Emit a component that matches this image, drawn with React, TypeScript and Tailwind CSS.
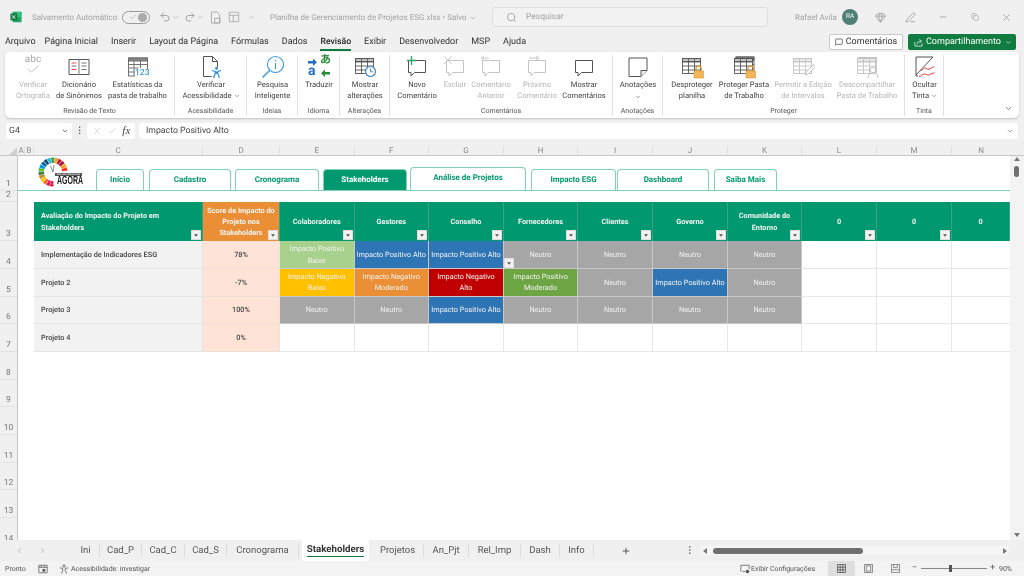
import React from 'react';
import { ChevronDown, ChevronLeft, ChevronRight, Minus, X, Plus, Search, Undo2, Redo2, Gem, PenLine, MessageSquare, Check, Copy } from 'lucide-react';

const gridCols = 'grid-cols-[169px_77px_74.5px_74.5px_75px_74px_75px_75px_74px_75px_75px_58px]';

// ---- ribbon icons ----
const Bubble = ({ c = '#555' }: { c?: string }) => (
  <path d="M3.5 5.5h17v12h-11l-3.5 3.5v-3.5h-2.5z" fill="#fff" stroke={c} strokeWidth="1" />
);

const SheetGrid = ({ c = '#555' }: { c?: string }) => (
  <g fill="none" stroke={c} strokeWidth="0.9">
    <rect x="2.5" y="3.5" width="18" height="15" fill="#fff" />
    <path d="M2.5 7h18M2.5 11h18M2.5 15h18M8.5 3.5v15M14.5 3.5v15" />
    <path d="M2.5 3.5h18v3h-18z" fill={c} fillOpacity="0.35" />
  </g>
);

const Lock = () => (
  <g>
    <path d="M16 16v-2.5a2.6 2.6 0 0 1 5.2 0V16" fill="none" stroke="#d9962f" strokeWidth="1.1" />
    <rect x="14" y="16" width="9.4" height="7" fill="#f3b559" stroke="#d9962f" strokeWidth="0.6" />
  </g>
);

const Ico = ({ children }: { children: React.ReactNode }) => (
  <svg viewBox="0 0 24 24" className="w-[24px] h-[24px]">{children}</svg>
);

const icons: Record<string, React.ReactNode> = {
  abc: (
    <div className="flex flex-col items-center h-[24px] text-[#a8a8a8] text-[10px] leading-[10px]">
      abc
      <svg viewBox="0 0 16 10" className="w-[14px] h-[9px]"><path d="M2 4l4 4 8-7" fill="none" stroke="#bdbdbd" strokeWidth="1" /></svg>
    </div>
  ),
  book: (
    <Ico>
      <path d="M2 4.500h9.500l.5.700.5-.700H22v15H12.500l-.5.600-.5-.600H2z" fill="#fff" stroke="#555" strokeWidth="1" />
      <path d="M12 5v14.500" stroke="#555" strokeWidth="0.8" />
      <path d="M4.500 8h5M4.500 14.500h5" stroke="#e0574f" strokeWidth="1" />
      <path d="M4.500 11h5M14.500 8h5M14.500 11h5M14.500 14.500h5" stroke="#777" strokeWidth="1" />
    </Ico>
  ),
  stats: (
    <div className="relative w-[24px] h-[24px]">
      <Ico>
        <g fill="none" stroke="#666" strokeWidth="0.9">
          <rect x="2.500" y="3" width="19" height="18" fill="#fff" />
          <path d="M2.500 3h19v3h-19z" fill="#888" />
          <path d="M2.500 9.500h19M2.500 13h10M2.500 17h8M8 6v15M14.500 6v7" />
        </g>
      </Ico>
      <span className="absolute right-0 bottom-[1px] bg-white text-[#3a9bdc] text-[8.5px] leading-[9px] font-medium">123</span>
    </div>
  ),
  access: (
    <Ico>
      <path d="M4.500 1.500h9l5 5v6" fill="none" stroke="#555" strokeWidth="1" />
      <path d="M4.500 1.500v20h8" fill="none" stroke="#555" strokeWidth="1" />
      <path d="M13.500 1.500v5h5" fill="none" stroke="#555" strokeWidth="1" />
      <circle cx="17.500" cy="13.500" r="1.400" fill="#2f8fd8" />
      <path d="M13 15.500l3.200 1v2l-1.600 4.500M22 15.500l-3.200 1v2l1.600 4.500" fill="none" stroke="#2f8fd8" strokeWidth="1.200" />
      <path d="M16.200 16.500h2.600v2.500h-2.600z" fill="#2f8fd8" />
    </Ico>
  ),
  search: (
    <Ico>
      <circle cx="14.500" cy="9.500" r="8" fill="#fff" stroke="#3b97da" strokeWidth="1.100" />
      <path d="M8.800 15.200L1.500 22.500" stroke="#3b97da" strokeWidth="1.400" />
      <path d="M14.500 8v6" stroke="#3b97da" strokeWidth="1.100" />
      <circle cx="14.500" cy="5.700" r="0.800" fill="#3b97da" />
    </Ico>
  ),
  translate: (
    <div className="relative w-[24px] h-[24px]">
      <Ico>
        <path d="M1 6h5V3.500l4 3.800-4 3.800V8.500H1z" fill="#1f6fc2" />
        <path d="M23 17h-5v-2.500l-4 3.800 4 3.800v-2.600h5z" fill="#2c8c3c" />
      </Ico>
      <span className="absolute left-[1px] top-[9px] text-[#1f6fc2] text-[14px] leading-[14px] font-bold">a</span>
      <span className="absolute right-[0px] top-[-2px] text-[#2c8c3c] text-[11px] leading-[13px] font-bold font-['Noto_Sans_CJK_JP',sans-serif]">あ</span>
    </div>
  ),
  changes: (
    <Ico>
      <SheetGrid />
      <circle cx="17.500" cy="16.500" r="5" fill="#fff" stroke="#3b8ccf" strokeWidth="1.200" />
      <path d="M17.500 13.500v3.300h2.400" fill="none" stroke="#3b8ccf" strokeWidth="1" />
    </Ico>
  ),
  newComment: (
    <Ico>
      <Bubble />
      <path d="M6.500 1v9M2 5.500h9" stroke="#2aa36b" strokeWidth="1.300" />
    </Ico>
  ),
  delComment: (
    <Ico>
      <Bubble c="#c4c4c4" />
      <path d="M1 1.500l7.500 7.500M8.500 1.500L1 9" stroke="#c4c4c4" strokeWidth="1" />
    </Ico>
  ),
  prevComment: (
    <Ico>
      <Bubble c="#c4c4c4" />
      <path d="M10 3H2.500M5 .8L2.500 3 5 5.200" fill="none" stroke="#c4c4c4" strokeWidth="1" />
    </Ico>
  ),
  nextComment: (
    <Ico>
      <Bubble c="#c4c4c4" />
      <path d="M4 3h9.500M11 .8L13.500 3 11 5.200" fill="none" stroke="#c4c4c4" strokeWidth="1" />
    </Ico>
  ),
  showComments: <Ico><Bubble /></Ico>,
  note: (
    <Ico>
      <path d="M3 3h18v12.500L15 21.500H3z" fill="#fff" stroke="#555" strokeWidth="1" />
      <path d="M21 15.500h-6v6" fill="#eee" stroke="#555" strokeWidth="1" />
    </Ico>
  ),
  unprotect: <Ico><SheetGrid /><Lock /></Ico>,
  protect: (
    <Ico>
      <g transform="translate(1.500 -1.500)"><SheetGrid /></g>
      <SheetGrid />
      <Lock />
    </Ico>
  ),
  ranges: (
    <Ico>
      <SheetGrid c="#c4c4c4" />
      <path d="M14.500 20l.8-3 7-7.500 2 2-7 7.500z" fill="#fff" stroke="#bbb" strokeWidth="0.900" />
    </Ico>
  ),
  unshare: (
    <Ico>
      <g transform="translate(1 -1)"><SheetGrid c="#c4c4c4" /></g>
      <SheetGrid c="#c4c4c4" />
      <circle cx="18" cy="15" r="2.800" fill="#fff" stroke="#bbb" strokeWidth="0.900" />
      <path d="M13 23c0-3.500 2-4.800 5-4.800s5 1.300 5 4.800" fill="#fff" stroke="#bbb" strokeWidth="0.900" />
    </Ico>
  ),
  ink: (
    <Ico>
      <path d="M3 2h17" stroke="#555" strokeWidth="1" />
      <path d="M3 2v19h2M20 2L3 20" fill="none" stroke="#555" strokeWidth="1" />
      <path d="M7 15c2 1.500 3-2 5-2s2 2 4 1.200 3-2 5-2.500M6 21.500c3-.5 3-2.500 5.500-2.500s3 1.800 5 .8 3-1.800 5-2" fill="none" stroke="#e8413c" strokeWidth="1" />
    </Ico>
  ),
};

type RibbonItem = { icon: string; lines: string[]; w: string; off?: boolean; drop?: boolean; dropLine?: boolean };
type RibbonGroup = { label: string; w: string; pad?: string; items: RibbonItem[] };

const groups: RibbonGroup[] = [
  {
    label: 'Revisão de Texto', w: 'w-[170px]', pad: 'pl-[3px]',
    items: [
      { icon: 'abc', lines: ['Verificar', 'Ortografia'], w: 'w-[50px]', off: true },
      { icon: 'book', lines: ['Dicionário', 'de Sinônimos'], w: 'w-[42px]' },
      { icon: 'stats', lines: ['Estatísticas da', 'pasta de trabalho'], w: 'w-[75px]' },
    ],
  },
  {
    label: 'Acessibilidade', w: 'w-[72px]',
    items: [{ icon: 'access', lines: ['Verificar', 'Acessibilidade'], w: 'w-[72px]', drop: true }],
  },
  { label: 'Ideias', w: 'w-[51px]', items: [{ icon: 'search', lines: ['Pesquisa', 'Inteligente'], w: 'w-[51px]' }] },
  { label: 'Idioma', w: 'w-[42px]', items: [{ icon: 'translate', lines: ['Traduzir'], w: 'w-[42px]' }] },
  { label: 'Alterações', w: 'w-[50px]', items: [{ icon: 'changes', lines: ['Mostrar', 'alterações'], w: 'w-[50px]' }] },
  {
    label: 'Comentários', w: 'w-[223px]',
    items: [
      { icon: 'newComment', lines: ['Novo', 'Comentário'], w: 'w-[54px]' },
      { icon: 'delComment', lines: ['Excluir'], w: 'w-[22px]', off: true },
      { icon: 'prevComment', lines: ['Comentário', 'Anterior'], w: 'w-[50px]', off: true },
      { icon: 'nextComment', lines: ['Próximo', 'Comentário'], w: 'w-[42px]', off: true },
      { icon: 'showComments', lines: ['Mostrar', 'Comentários'], w: 'w-[52px]' },
    ],
  },
  { label: 'Anotações', w: 'w-[50px]', items: [{ icon: 'note', lines: ['Anotações'], w: 'w-[50px]', dropLine: true }] },
  {
    label: 'Proteger', w: 'w-[242px]',
    items: [
      { icon: 'unprotect', lines: ['Desproteger', 'planilha'], w: 'w-[58px]' },
      { icon: 'protect', lines: ['Proteger Pasta', 'de Trabalho'], w: 'w-[46px]' },
      { icon: 'ranges', lines: ['Permitir a Edição', 'de Intervalos'], w: 'w-[72px]', off: true },
      { icon: 'unshare', lines: ['Descompartilhar', 'Pasta de Trabalho'], w: 'w-[56px]', off: true },
    ],
  },
  { label: 'Tinta', w: 'w-[39px]', items: [{ icon: 'ink', lines: ['Ocultar', 'Tinta'], w: 'w-[39px]', drop: true }] },
];

const menu = ['Arquivo', 'Página Inicial', 'Inserir', 'Layout da Página', 'Fórmulas', 'Dados', 'Revisão', 'Exibir', 'Desenvolvedor', 'MSP', 'Ajuda'];

const navTabs = [
  { label: 'Início', cls: 'w-[48px] mr-[5px]' },
  { label: 'Cadastro', cls: 'w-[82px] mr-[4px]' },
  { label: 'Cronograma', cls: 'w-[84px] mr-[4px]' },
  { label: 'Stakeholders', cls: 'w-[84px] mr-[3px]', active: true },
  { label: 'Análise de Projetos', cls: 'w-[116px] mr-[5px] h-[23px] pb-[2px]' },
  { label: 'Impacto ESG', cls: 'w-[85px] mr-[1px]' },
  { label: 'Dashboard', cls: 'w-[92px] mr-[5px]' },
  { label: 'Saiba Mais', cls: 'w-[63px]' },
];

const headers = [
  { text: 'Avaliação do Impacto do Projeto em Stakeholders', cls: 'bg-[#00996f] justify-start text-left pl-[7px] pr-[20px]' },
  { text: 'Score de Impacto do Projeto nos Stakeholders', cls: 'bg-[#ea8f35] justify-center text-center px-[3px]' },
  { text: 'Colaboradores' },
  { text: 'Gestores' },
  { text: 'Conselho' },
  { text: 'Fornecedores' },
  { text: 'Clientes' },
  { text: 'Governo' },
  { text: 'Comunidade do Entorno' },
  { text: '0' },
  { text: '0' },
  { text: '0', noFilter: true },
];

const palette: Record<string, string> = {
  alto: 'bg-[#2e75b6]',
  baixo: 'bg-[#a9d18e]',
  negBaixo: 'bg-[#ffc000]',
  negMod: 'bg-[#ea8f35]',
  negAlto: 'bg-[#c00000]',
  mod: 'bg-[#6ea544]',
  neutro: 'bg-[#a6a6a6]',
};

const labels: Record<string, string> = {
  alto: 'Impacto Positivo Alto',
  baixo: 'Impacto Positivo Baixo',
  negBaixo: 'Impacto Negativo Baixo',
  negMod: 'Impacto Negativo Moderado',
  negAlto: 'Impacto Negativo Alto',
  mod: 'Impacto Positivo Moderado',
  neutro: 'Neutro',
};

const rows = [
  { name: 'Implementação de Indicadores ESG', score: '78%', vals: ['baixo', 'alto', 'alto', 'neutro', 'neutro', 'neutro', 'neutro'] },
  { name: 'Projeto 2', score: '-7%', vals: ['negBaixo', 'negMod', 'negAlto', 'mod', 'neutro', 'alto', 'neutro'] },
  { name: 'Projeto 3', score: '100%', vals: ['neutro', 'neutro', 'alto', 'neutro', 'neutro', 'neutro', 'neutro'] },
  { name: 'Projeto 4', score: '0%', vals: ['', '', '', '', '', '', ''] },
];

const rowHeads = [
  { n: '1', cls: 'h-[35px]' },
  { n: '2', cls: 'h-[11px]' },
  { n: '3', cls: 'h-[39px]' },
  { n: '4', cls: 'h-[28px]' },
  { n: '5', cls: 'h-[27.5px]' },
  { n: '6', cls: 'h-[27.5px]' },
  { n: '7', cls: 'h-[28px]' },
  { n: '8', cls: 'h-[27.7px]' },
  { n: '9', cls: 'h-[27.7px]' },
  { n: '10', cls: 'h-[27.7px]' },
  { n: '11', cls: 'h-[27.7px]' },
  { n: '12', cls: 'h-[27.7px]' },
  { n: '13', cls: 'h-[27.7px]' },
  { n: '14', cls: 'h-[27.7px]' },
];

const sheetTabs = [
  { t: 'Ini', w: 'w-[28px]' },
  { t: 'Cad_P', w: 'w-[42px]' },
  { t: 'Cad_C', w: 'w-[43px]' },
  { t: 'Cad_S', w: 'w-[42px]' },
  { t: 'Cronograma', w: 'w-[72px]' },
];
const sheetTabs2 = [
  { t: 'Projetos', w: 'w-[52px]' },
  { t: 'An_Pjt', w: 'w-[45px]' },
  { t: 'Rel_Imp', w: 'w-[52px]' },
  { t: 'Dash', w: 'w-[39px]' },
  { t: 'Info', w: 'w-[34px]' },
];

const colLetters = ['A', 'B', 'C', 'D', 'E', 'F', 'G', 'H', 'I', 'J', 'K', 'L', 'M', 'N'];

const sdg = ['#e5243b', '#dd1367', '#fd6925', '#fcc30b', '#bf8b2e', '#3f7e44', '#56c02b', '#0a97d9', '#00689d', '#19486a', '#26bde2', '#4c9f38', '#dda63a', '#c5192d', '#a21942', '#fd9d24', '#ff3a21'];

const segment = (i: number) => {
  // anel aberto no canto inferior direito
  const start = 88 + i * 15.8;
  const end = start + 14;
  const pt = (a: number, r: number) => {
    const rad = (a * Math.PI) / 180;
    return `${(15 + r * Math.cos(rad)).toFixed(2)} ${(15 + r * Math.sin(rad)).toFixed(2)}`;
  };
  return `M${pt(start, 14.5)} A14.5 14.5 0 0 1 ${pt(end, 14.5)} L${pt(end, 9)} A9 9 0 0 0 ${pt(start, 9)} Z`;
};

const Logo = () => (
  <div className="relative w-[44px] h-[31px] ml-[20px] mr-[14px] mb-[2px] shrink-0">
    <svg viewBox="0 0 30 30" className="absolute left-0 top-0 w-[30px] h-[30px]">
      {sdg.map((c, i) => <path key={i} d={segment(i)} fill={c} />)}
      <path d="M15 15l-2.500-6M15 15l1-7" stroke="#555" strokeWidth="0.7" />
    </svg>
    <span className="absolute left-[17px] top-[16px] w-[27px] h-[3px] bg-[#555] text-white text-[2.6px] leading-[3px] text-center whitespace-nowrap overflow-hidden">SUSTENTABILIDADE</span>
    <span className="absolute left-[19px] top-[20px] text-[#222] text-[7px] leading-[6px] font-bold font-['Liberation_Sans',sans-serif] scale-y-[1.7] origin-top">AGORA</span>
  </div>
);

const FilterBtn = ({ cls = 'right-[1px] bottom-[1px]' }: { cls?: string }) => (
  <span className={`absolute ${cls} w-[10px] h-[10px] bg-[#f2f2f2] border border-[#ddd] flex items-center justify-center`}>
    <svg viewBox="0 0 6 4" className="w-[4px] h-[3px]"><path d="M0 0h6L3 4z" fill="#555" /></svg>
  </span>
);

export default function App() {
  return (
    <div className="w-[1024px] h-[576px] overflow-hidden flex flex-col bg-[#f0f0f0] text-[#333] font-['Roboto','Noto_Sans',sans-serif] [text-rendering:geometricPrecision] blur-[0.3px]">
      {/* barra de título */}
      <div className="h-[34px] shrink-0 flex items-center text-[#a3a3a3] text-[8px]">
        <svg viewBox="0 0 14 14" className="w-[12px] h-[12px] ml-[10px]">
          <rect x="3" y="1" width="10.500" height="12" rx="1" fill="#21a366" />
          <rect x="8" y="1" width="5.500" height="6" fill="#33c481" />
          <rect x="0.500" y="3" width="8" height="8" rx="1" fill="#107c41" />
          <path d="M2.500 5l3.500 4M6 5L2.500 9" stroke="#fff" strokeWidth="1" />
        </svg>
        <span className="ml-[10px] w-[87px] pt-[1px] whitespace-nowrap">Salvamento Automático</span>
        <div className="ml-[3px] w-[28px] h-[13px] rounded-full border border-[#999] flex items-center justify-between pl-[6px] pr-[2px]">
          <Check size={8} strokeWidth={2} />
          <span className="w-[9px] h-[9px] rounded-full bg-[#aaa]" />
        </div>
        <Undo2 size={12} className="ml-[9px]" />
        <ChevronDown size={7} className="ml-[1px]" />
        <Redo2 size={12} className="ml-[5px]" />
        <ChevronDown size={7} className="ml-[1px]" />
        <svg viewBox="0 0 12 14" className="w-[11px] h-[13px] ml-[6px]"><path d="M1.500 1h6l3 3v9h-9zM5 8h6v5H5z" fill="none" stroke="#aaa" /></svg>
        <svg viewBox="0 0 14 14" className="w-[12px] h-[12px] ml-[7px]"><path d="M1.500 1.500h11v11h-11zM1.500 5h11M6 5v7.500" fill="none" stroke="#aaa" /></svg>
        <ChevronDown size={7} className="ml-[8px]" />
        <span className="ml-[15px] w-[208px] pt-[1px] whitespace-nowrap flex items-center">
          Planilha de Gerenciamento de Projetos ESG.xlsx • Salvo
          <ChevronDown size={8} className="ml-[2px]" />
        </span>
        <div className="ml-[14px] w-[276px] h-[20px] rounded-[3px] border border-[#dedede] bg-[#f2f2f2] flex items-center pl-[13px] text-[8.5px]">
          <Search size={11} />
          <span className="ml-[9px]">Pesquisar</span>
        </div>
        <span className="ml-[27px] w-[47px] pt-[1px] whitespace-nowrap">Rafael Avila</span>
        <span className="w-[16px] h-[16px] rounded-full bg-[#4f7f75] text-white text-[6.5px] flex items-center justify-center">RA</span>
        <Gem size={11} className="ml-[17px]" />
        <PenLine size={11} className="ml-[19px]" />
        <Minus size={10} className="ml-[22px]" />
        <Copy size={8} className="ml-[23px]" />
        <X size={11} className="ml-[22px]" />
      </div>

      {/* abas do menu */}
      <div className="h-[18px] shrink-0 flex items-center pl-[5px] text-[9px] text-[#333] relative">
        <div className="flex items-center gap-[13px] flex-1">
          {menu.map(m => (
            <span key={m} className={m === 'Revisão' ? 'font-medium text-[8.7px] text-[#222] border-b-[2px] border-[#107c41] leading-[13px] h-[15px] mt-[1px]' : m === 'Arquivo' ? 'mr-[-4px]' : 'whitespace-nowrap'}>{m}</span>
          ))}
        </div>
        <div className="flex items-center justify-center gap-[3px] w-[74px] h-[16px] mb-[2px] bg-white border border-[#c8c8c8] rounded-[2px] mr-[5px]">
          <MessageSquare size={8} />
          <span className="pt-[1px]">Comentários</span>
        </div>
        <div className="flex items-center pl-[6px] w-[108px] h-[16px] mb-[2px] bg-[#107c41] text-white rounded-[2px] mr-[8px]">
          <svg viewBox="0 0 10 10" className="w-[9px] h-[9px]"><path d="M1 4.500v4.500h8V6M3.500 7c0-2.500 1.500-3.500 4-3.500M6 1.500l2.500 2L6 5.500" fill="none" stroke="#fff" strokeWidth="0.8" /></svg>
          <span className="ml-[3px] pt-[1px]">Compartilhamento</span>
          <ChevronDown size={7} className="ml-auto mr-[4px]" />
        </div>
      </div>

      {/* faixa de opções */}
      <div className="mx-[5px] h-[66px] shrink-0 bg-white rounded-[5px] shadow-[0_1px_2px_rgba(0,0,0,0.2)] flex text-[7.6px] leading-[10.5px]">
        {groups.map(g => (
          <div key={g.label} className={`${g.w} shrink-0 border-r border-[#e2e2e2] mt-[3px] mb-[2px] flex flex-col items-stretch`}>
            <div className={`flex flex-1 ${g.pad ?? ''}`}>
              {g.items.map(it => (
                <div key={it.icon} className={`${it.w} shrink-0 flex flex-col items-center whitespace-nowrap ${it.off ? 'text-[#b5b5b5]' : 'text-[#444]'}`}>
                  <div className="h-[24px] flex items-center justify-center">{icons[it.icon]}</div>
                  <div className="mt-[1px]">{it.lines[0]}</div>
                  {it.lines[1] && (
                    <div className="flex items-center">
                      {it.lines[1]}
                      {it.drop && <ChevronDown size={6} className="ml-[2px]" />}
                    </div>
                  )}
                  {it.dropLine && <ChevronDown size={6} className="mt-[3px]" />}
                </div>
              ))}
            </div>
            <div className="text-center text-[7px] leading-[9px] text-[#555] whitespace-nowrap">{g.label}</div>
          </div>
        ))}
        <div className="flex-1 flex items-end justify-end pr-[6px] pb-[5px]">
          <ChevronDown size={9} className="text-[#555]" />
        </div>
      </div>

      {/* barra de fórmulas */}
      <div className="h-[16px] mt-[5px] shrink-0 flex items-center text-[8.7px]">
        <div className="ml-[6px] w-[66px] h-full bg-white rounded-[3px] flex items-center justify-between px-[3px] text-[#444]">
          <span className="pt-[1px]">G4</span>
          <ChevronDown size={8} />
        </div>
        <span className="w-[15px] text-center text-[#666] font-bold leading-[8px]">⋮</span>
        <div className="w-[48px] h-full bg-white rounded-[3px] flex items-center justify-around px-[2px] text-[#bbb]">
          <X size={10} strokeWidth={1.2} />
          <Check size={10} strokeWidth={1.2} />
          <span className="text-[#444] italic font-['Liberation_Serif',serif] text-[11px]">fx</span>
        </div>
        <div className="ml-[4px] w-[879px] h-full bg-white rounded-[3px] flex items-center justify-between pl-[7px] pr-[4px] text-[#444]">
          <span className="pt-[1px]">Impacto Positivo Alto</span>
          <ChevronDown size={8} className="text-[#777]" />
        </div>
      </div>

      {/* cabeçalho das colunas */}
      <div className="h-[9px] mt-[7px] shrink-0 flex text-[8px] leading-[9px] text-[#8a8a8a]">
        <div className="w-[18px] shrink-0 flex justify-end items-end pr-[1px]">
          <svg viewBox="0 0 8 8" className="w-[8px] h-[8px]"><path d="M8 0v8H0z" fill="#d0d0d0" /></svg>
        </div>
        <div className="w-[992px] shrink-0 grid grid-cols-[7px_9px_169px_77px_74.5px_74.5px_75px_74px_75px_75px_74px_75px_75px_58px]">
          {colLetters.map(l => (
            <div key={l} className="text-center border-r border-[#e0e0e0] last:border-r-0">{l}</div>
          ))}
        </div>
      </div>

      {/* planilha */}
      <div className="flex-1 min-h-0 flex border-t border-[#c6c6c6] overflow-hidden">
        <div className="w-[18px] shrink-0 bg-[#f0f0f0] border-r border-[#c6c6c6] text-[8.5px] text-[#777]">
          {rowHeads.map(r => (
            <div key={r.n} className={`${r.cls} flex items-end justify-center border-b border-[#e2e2e2] leading-[11px]`}>{r.n}</div>
          ))}
        </div>

        <div className="w-[992px] shrink-0 bg-white flex flex-col">
          <div className="h-[35px] shrink-0 flex items-end border-b border-[#7fd1b8]">
            <Logo />
            {navTabs.map(t => (
              <div
                key={t.label}
                className={`${t.cls} h-[21px] shrink-0 rounded-t-[4px] border border-b-0 border-[#7fd1b8] flex items-center justify-center text-[8px] font-bold ${t.active ? 'bg-[#00996f] text-white' : 'bg-white text-[#00996f]'}`}
              >
                {t.label}
              </div>
            ))}
          </div>

          <div className={`mt-[11px] ml-[16px] grid ${gridCols} grid-rows-[39px_28px_27.5px_27.5px_28px] text-[7.3px] leading-[11.3px]`}>
            {headers.map((h, i) => (
              <div
                key={i}
                className={`relative flex items-center font-bold text-[#f4f4f4] border-r border-[#3f9f84] ${h.cls ?? 'bg-[#00996f] justify-center text-center px-[5px]'}`}
              >
                <span>{h.text}</span>
                {!h.noFilter && <FilterBtn />}
              </div>
            ))}

            {rows.map(r => (
              <React.Fragment key={r.name}>
                <div className="bg-[#f2f2f2] text-[#444] font-medium flex items-center pl-[7px] border-b border-r border-[#e4e4e4]">{r.name}</div>
                <div className="bg-[#fde4d6] text-[#444] font-medium flex items-center justify-center border-b border-r border-[#efe0d8]">{r.score}</div>
                {r.vals.map((v, i) => (
                  <div
                    key={i}
                    className={`relative flex items-center justify-center text-center border-b border-r px-0 ${v ? `${palette[v]} text-[#f2f2f2] border-[#c8c8c8]` : 'border-[#e8e8e8]'}`}
                  >
                    <span className={v === 'baixo' || v === 'negBaixo' || v === 'negMod' || v === 'negAlto' || v === 'mod' ? 'px-[4px]' : 'whitespace-nowrap'}>{v ? labels[v] : ''}</span>
                    {r.score === '78%' && i === 2 && <FilterBtn cls="right-[-11px] bottom-[0px] z-10" />}
                  </div>
                ))}
                <div className="border-b border-r border-[#e8e8e8]" />
                <div className="border-b border-r border-[#e8e8e8]" />
                <div className="border-b border-[#e8e8e8]" />
              </React.Fragment>
            ))}
          </div>
        </div>

        {/* rolagem vertical */}
        <div className="flex-1 flex flex-col items-center pr-[1px] bg-[#f3f3f3]">
          <svg viewBox="0 0 6 4" className="w-[6px] h-[4px] mt-[1px]"><path d="M3 0l3 4H0z" fill="#777" /></svg>
          <div className="w-[5px] h-[11px] mt-[5px] rounded-full bg-[#707070]" />
          <svg viewBox="0 0 6 4" className="w-[6px] h-[4px] mt-auto mb-[3px]"><path d="M0 0h6L3 4z" fill="#777" /></svg>
        </div>
      </div>

      {/* abas das planilhas */}
      <div className="h-[21px] shrink-0 flex items-center text-[9.5px] text-[#555] relative">
        <span className="w-[72px] shrink-0 flex gap-[14px] pl-[15px] text-[#aaa]">
          <ChevronLeft size={9} />
          <ChevronRight size={9} />
        </span>
        {sheetTabs.map(t => (
          <div key={t.t} className={`${t.w} h-[13px] pt-[2px] shrink-0 flex items-center justify-center border-r border-[#dcdcdc] last:border-r-0`}>{t.t}</div>
        ))}
        <div className="w-[3px]" />
        <div className="w-[67px] h-full shrink-0 bg-white rounded-b-[3px] flex flex-col items-center justify-start pt-[3px] font-bold text-[#333] text-[9.7px]">
          <span className="leading-[13px] border-b-[1.5px] border-[#107c41]">Stakeholders</span>
        </div>
        <div className="w-[3px]" />
        {sheetTabs2.map(t => (
          <div key={t.t} className={`${t.w} h-[13px] pt-[2px] shrink-0 flex items-center justify-center border-r border-[#dcdcdc]`}>{t.t}</div>
        ))}
        <Plus size={10} className="ml-[27px] text-[#444]" />
        <span className="ml-[54px] font-bold leading-[8px] text-[#666]">⋮</span>
        <div className="ml-[5px] w-[310px] h-[9px] bg-[#f5f5f5] rounded-full flex items-center px-[3px]">
          <svg viewBox="0 0 4 6" className="w-[4px] h-[6px]"><path d="M4 0v6L0 3z" fill="#777" /></svg>
          <div className="ml-[6px] w-[150px] h-[6px] rounded-full bg-[#707070]" />
          <svg viewBox="0 0 4 6" className="w-[4px] h-[6px] ml-auto"><path d="M0 0v6l4-3z" fill="#777" /></svg>
        </div>
      </div>

      {/* barra de status */}
      <div className="h-[15px] shrink-0 flex items-center bg-[#f3f3f3] text-[7px] text-[#555] pr-[12px] whitespace-nowrap">
        <span className="ml-[5px] w-[24px] pt-[1px]">Pronto</span>
        <svg viewBox="0 0 12 12" className="w-[10px] h-[10px] ml-[9px]"><path d="M1 1.500h10v9H1zM1 4h10M4 1.500V4M8 1.500V4" fill="none" stroke="#666" /><circle cx="7" cy="7.500" r="1.800" fill="#555" /></svg>
        <svg viewBox="0 0 12 12" className="w-[10px] h-[10px] ml-[11px]"><circle cx="6" cy="2.500" r="1.500" fill="none" stroke="#666" /><path d="M1 4.500l3.500 1v2L3 11.500M11 4.500l-3.500 1v2l1.500 4" fill="none" stroke="#666" /></svg>
        <span className="ml-[2px] pt-[1px]">Acessibilidade: investigar</span>
        <svg viewBox="0 0 12 12" className="w-[10px] h-[10px] ml-auto"><path d="M1 9V1.500h10V6M3 9h3" fill="none" stroke="#666" /><circle cx="9" cy="9" r="2.200" fill="#555" /></svg>
        <span className="ml-[1px] w-[76px] pt-[1px]">Exibir Configurações</span>
        <div className="ml-[1px] w-[27px] h-full bg-[#dedede] flex items-center justify-center">
          <svg viewBox="0 0 10 10" className="w-[9px] h-[9px]"><path d="M.5.5h9v9h-9zM.5 3.500h9M.5 6.500h9M3.500.5v9M6.500.5v9" fill="none" stroke="#444" strokeWidth="0.8" /></svg>
        </div>
        <svg viewBox="0 0 10 10" className="w-[9px] h-[9px] ml-[9px]"><path d="M.5.5h9v9h-9zM2.500 2h5v6h-5z" fill="none" stroke="#666" strokeWidth="0.8" /></svg>
        <svg viewBox="0 0 10 10" className="w-[9px] h-[9px] ml-[18px]"><path d="M.5.5h9v9h-9zM.5 6.500h9M3 .5v3.500h4V.5" fill="none" stroke="#666" strokeWidth="0.8" /></svg>
        <span className="ml-[12px] w-[5px] text-[9px]">−</span>
        <div className="relative ml-[4px] w-[66px] h-[1px] bg-[#888]">
          <span className="absolute left-[28px] top-[-3px] w-[3px] h-[7px] bg-[#555]" />
        </div>
        <span className="ml-[3px] w-[5px] text-[9px]">+</span>
        <span className="ml-[4px] pt-[1px]">90%</span>
      </div>
    </div>
  );
}
